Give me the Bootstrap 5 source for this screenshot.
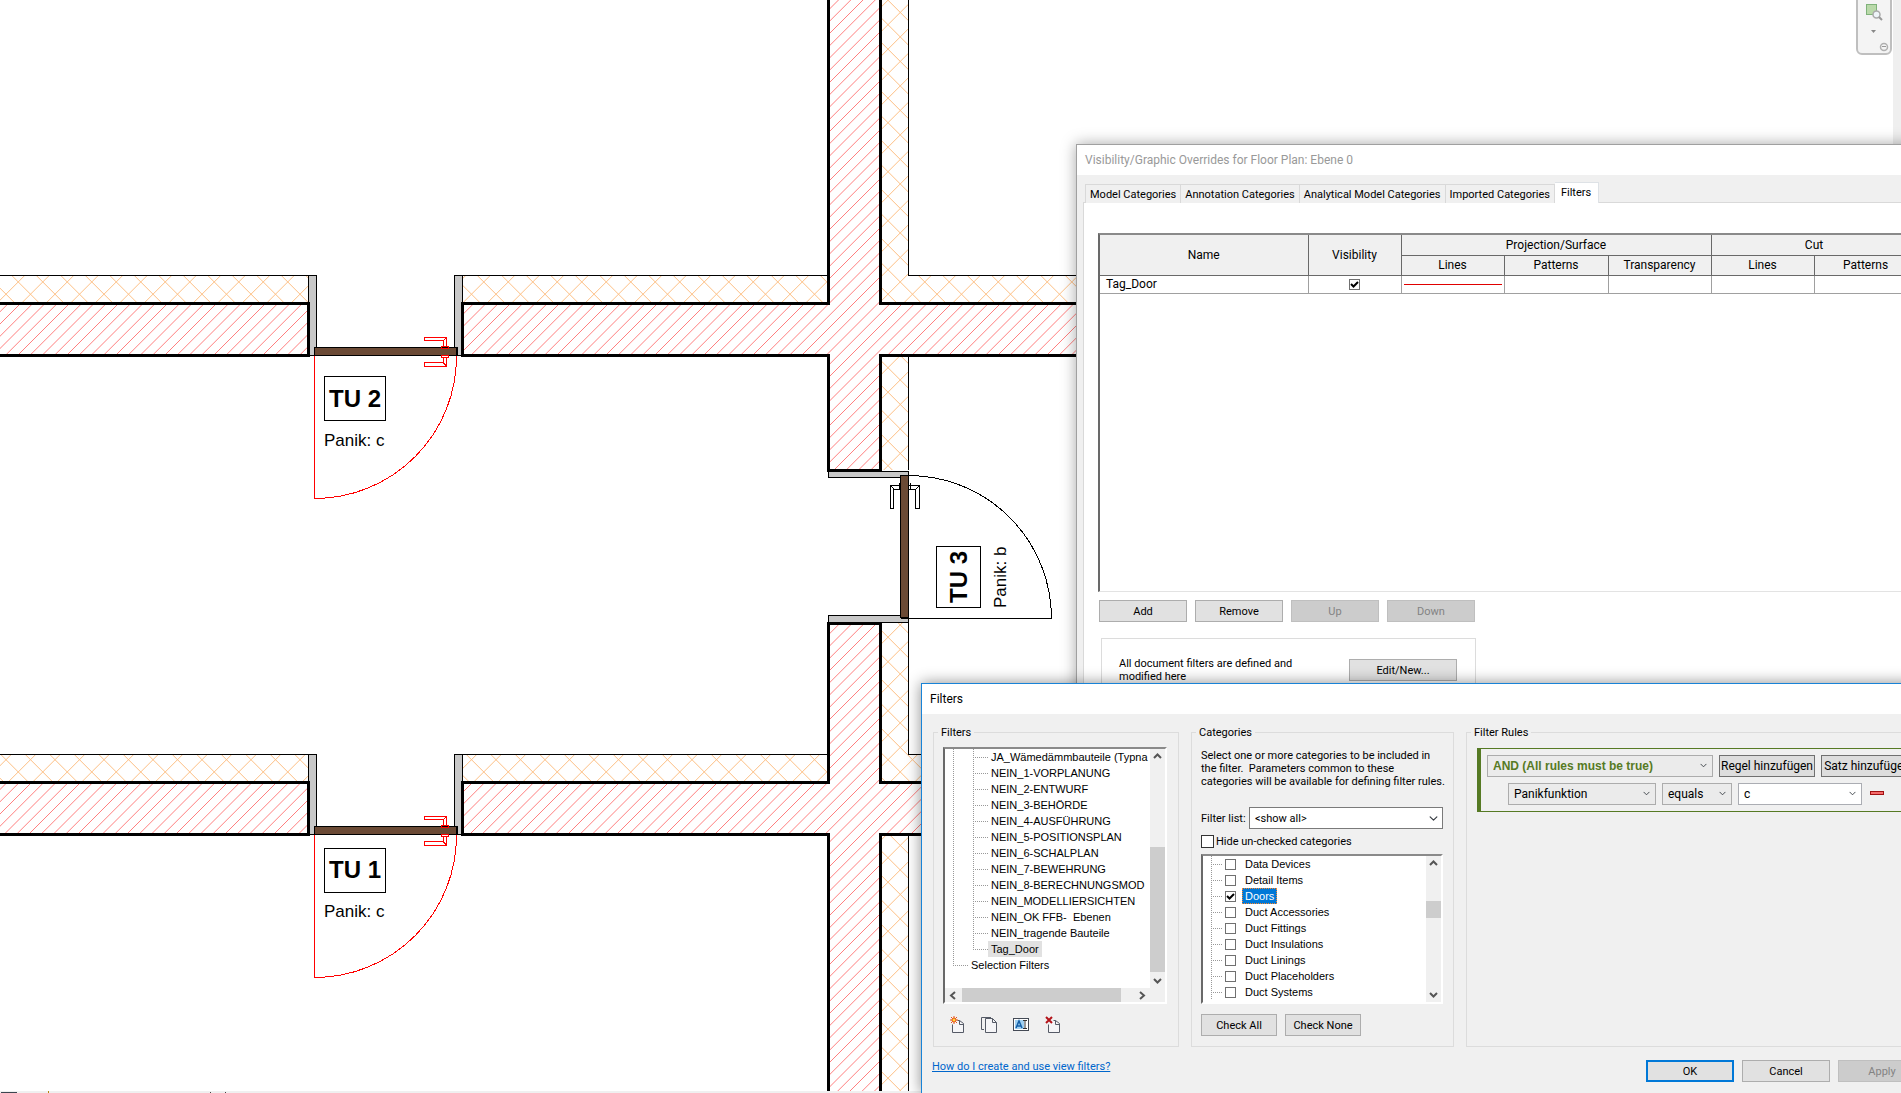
<!DOCTYPE html>
<html lang="en">
<head>
<meta charset="utf-8">
<meta name="viewport" content="width=device-width, initial-scale=1">
<title>Floor Plan: Ebene 0</title>
<link rel="stylesheet" href="https://cdn.jsdelivr.net/npm/bootstrap@5.3.0/dist/css/bootstrap.min.css">
<style>
body{font-family:Roboto,"Open Sans",sans-serif;font-size:11px;line-height:13px;color:#000;background:#fff;height:100vh}
.plan-svg{width:100%;height:100%;display:block}
.plan-svg text{font-family:"Liberation Sans",sans-serif;fill:#000}
.tag-no{font-size:24px;font-weight:700}
.tag-info{font-size:17px}
/* windows */
.win{position:absolute;background:#f0f0f0}
.win-overrides{left:1076px;top:144px;right:-40px;bottom:0;border:1px solid #a0a0a0;box-shadow:0 0 14px rgba(0,0,0,.35)}
.win-filters{left:921px;top:683px;right:-37px;bottom:0;border:1px solid #1883d7;border-bottom:0;box-shadow:0 0 14px rgba(0,0,0,.45)}
.win-title{background:#fff;height:30px;padding-left:8px;font-size:12px;font-weight:400;margin:0}
.win-title.idle{color:#999}
.view-edge{position:absolute;right:0;top:0;width:8px;height:144px;background:#efefef}
.nav-wheel{position:absolute;right:9px;top:-12px;width:36px;height:67px;background:#f4f4f4;border:2px solid #bfbfbf;border-radius:6px}
.status-edge{position:absolute;left:0;right:0;bottom:0;height:2px;background:#f0f0f0}
/* controls */
.btn-win{--bs-btn-font-size:11px;--bs-btn-line-height:13px;--bs-btn-padding-x:0;--bs-btn-padding-y:0;--bs-btn-border-radius:0;--bs-btn-color:#000;--bs-btn-bg:#e1e1e1;--bs-btn-border-color:#adadad;--bs-btn-hover-color:#000;--bs-btn-hover-bg:#e5f1fb;--bs-btn-hover-border-color:#0078d7;--bs-btn-disabled-color:#838383;--bs-btn-disabled-bg:#ccc;--bs-btn-disabled-border-color:#bfbfbf;--bs-btn-disabled-opacity:1;width:88px;height:22px;flex:none}
.btn-win.btn-default{border:2px solid #0078d7}
.btn-win.btn-check-set{width:76px}
.btn-win.btn-edit{width:108px;margin-top:2px}
.btn-win.btn-rule{width:auto;padding:0 1px;min-width:92px;font-size:12px;--bs-btn-bg:#ddd;--bs-btn-border-color:#707070}
.btn-win.btn-rule-add{width:96px}
.select-win{font-size:11px;line-height:13px;color:#000;height:22px;min-height:0;padding:0 18px 0 5px;border:1px solid #7a7a7a;border-radius:0;background-color:#fff;background-size:9px 9px;background-position:right 4px center;flex:none}
.select-rule{font-size:12px;border-color:#acacac;background-color:#ebebeb;background-size:7px 7px;background-position:right 5px top 6px}
.select-value{background-color:#fff;border-color:#abadb3}
.rule-and{color:#567a24;font-family:"Liberation Sans",sans-serif;font-weight:700}
.tick[type=checkbox]{width:11px;height:11px;margin:0;border:1px solid #707070;border-radius:0;background-color:#fff;flex:none;float:none}
.tick[type=checkbox]:checked{border-color:#707070;background-size:9px 9px;background-image:url("data:image/svg+xml,%3csvg xmlns='http://www.w3.org/2000/svg' viewBox='0 0 9 9'%3e%3cpath d='M1 4l2.5 2.5L8 2' fill='none' stroke='%23000' stroke-width='2'/%3e%3c/svg%3e")}
.tick-lg[type=checkbox]{width:13px;height:13px;border-color:#333}
#catTree .tick{margin:0 6px 0 3px}
/* tabs */
.tabs-win{padding:7px 0 0 8px;margin:0;border:0}
.tabs-win .nav-link{color:#000;font-size:11px;line-height:13px;padding:2px 4px;height:19px;border:1px solid #d9d9d9;border-bottom:0;border-left:0;border-radius:0;background:#f0f0f0;white-space:nowrap}
.tabs-win .nav-item:first-child .nav-link{border-left:1px solid #d9d9d9}
.tabs-win .nav-link.active{background:#fff;height:21px;padding:1px 7px 3px 6px;margin-bottom:-1px}
.tab-page{margin-left:6px;background:#fff;border:1px solid #d9d9d9;padding:30px 0 0 14px}
/* overrides table */
.grid-frame{border:2px solid #696969;border-color:#8a8a8a #fff #e3e3e3 #696969;border-bottom-width:1px;height:359px}
.grid-table{table-layout:fixed;width:1026px;border-collapse:collapse;font-size:12px;line-height:14px}
.grid-table th{font-weight:400;text-align:center;background:#f0f0f0;border:1px solid #696969;height:20px;padding:0;border-top:0}
.grid-table td{border:1px solid #a0a0a0;height:18px;padding:0;text-align:center;vertical-align:middle}
.grid-table tr>:first-child{border-left:0}
.grid-table tr.sub>:first-child{border-left:1px solid #696969}
.grid-table td.cell-name{text-align:left;padding-left:6px}
.line-sample{border-top:1px solid #e00000;margin:0 2px}
.under-grid{padding-left:1px}
.note-box{width:375px;margin:16px 0 0 2px;padding:18px 18px 18px 17px}
.note-box,.group-win{border:1px solid #dcdcdc}
.note-box p{width:190px}
/* group boxes */
.group-win{height:321px;min-width:0;margin:0;padding:0}
.group-win legend{float:none;width:auto;font-size:11px;line-height:13px;margin:0 0 0 4px;padding:0 3px}
.win-body{padding:12px 0 0 11px;gap:12px}
.group-filters{width:246px;flex:none}
.group-cats{width:263px;flex:none}
.filters-inner{padding:8px 11px 0 9px}
.filter-tools{padding:12px 0 0 6px;gap:16px}
.cats-inner{padding:10px 10px 0 9px}
.cats-inner p{white-space:nowrap}
.pane-list{border:2px solid #696969;border-color:#8a8a8a #fff #fff #696969;background:#fff;font-family:"Liberation Sans",sans-serif;overflow:hidden}
.pane-list ul{height:100%;overflow:hidden}
.pane-list li{display:flex;align-items:center;height:16px;white-space:nowrap}
.dots{align-self:stretch;flex:none;width:20px;--v:100%;background:repeating-linear-gradient(#999 0 1px,transparent 1px 2px) left top/1px var(--v) no-repeat}
.dots.twig{width:15px;background:repeating-linear-gradient(#999 0 1px,transparent 1px 2px) left top/1px var(--v) no-repeat,repeating-linear-gradient(90deg,#999 0 1px,transparent 1px 2px) left 8px/100% 1px no-repeat}
.dots.last{--v:50%}
.group-cats .dots.twig{width:11px}
.node{padding:0 3px;line-height:16px}
.node.chosen{background:#e1e1e1}
.node.active-node{background:#0078d7;color:#fff;outline:1px dotted #ff8728;outline-offset:-1px}
.sb{background:#f0f0f0;flex:none;display:flex}
.sb svg{width:15px;height:15px;flex:none}
.sb-v{width:15px;flex-direction:column}
.sb-thumb{background:#cdcdcd}
.icon-btn{border:0;background:none;padding:0;width:16px;height:16px;line-height:0}
.help-link{color:#0066cc}
.rule-set{border:1px solid #567a24;border-left-width:4px;margin:9px 0 0 10px;padding:6px 0 6px 6px}
.rule-line{gap:6px}
.rule-line+.rule-line{margin-top:6px;padding-left:21px}
</style>
<script src="https://cdn.jsdelivr.net/npm/bootstrap@5.3.0/dist/js/bootstrap.bundle.min.js"></script>
</head>
<body class="position-relative overflow-hidden">

<main class="h-100">
<svg class="plan-svg" role="img" aria-label="Floor plan">
  <defs>
    <clipPath id="brick"><path d="M0 303H308V355H0zM462 303H1100V355H462zM0 782H308V834H0zM462 782H1100V834H462zM829 0H881V470H829zM829 624H881V1091H829z"/></clipPath>
    <clipPath id="insul"><path d="M0 276H308V302H0zM462 276H827V302H462zM882 276H1100V302H882zM0 755H308V781H0zM462 755H827V781H462zM882 755H1100V781H882zM882 0H908V276H882zM882 356H908V470H882zM882 623H908V755H882zM882 836H908V1091H882z"/></clipPath>
    <g id="door">
      <path d="M308.500 275.500H316.500V355.500H308.500zM454.500 275.500H462.500V355.500H454.500z" fill="#c8c8c8" stroke="#000"/>
      <path d="M308.500 302V357M462.500 302V357" stroke="#000" stroke-width="3"/>
      <path d="M308 355.500H462" stroke="#000"/>
      <rect x="314.500" y="347.500" width="142" height="8" fill="#6b4a35" stroke="#000"/>
      <path d="M457 347V356" stroke="#000" stroke-width="2"/>
      <g fill="none" stroke="#f00">
        <path d="M314.500 356V498.500A142 142 0 0 0 456.500 356"/>
        <path d="M443.500 346V340.500H424.500V337.500H446.500V346M446 338L443 341M441.500 348.500V346.500H448.500V348.500z"/>
        <path d="M443.500 357V362.500H424.500V366.500H446.500V357M446 366L443 362M441.500 355.500H448.500V357.500H441.500z"/>
      </g>
    </g>
  </defs>
  <g clip-path="url(#insul)"><path id="cross" fill="none" stroke="#fdbf84"/></g>
  <g clip-path="url(#brick)"><path id="slant" fill="none" stroke="#ff7f7f"/></g>
  <g fill="none" stroke="#000" shape-rendering="crispEdges">
    <path d="M0 275.500H308M462 275.500H828M908.500 0V275.500H1100M908.500 356V470M0 754.500H308M462 754.500H828M908.500 623V754.500H1100M908.500 836V1091"/>
    <g stroke-width="3">
      <path d="M0 303.500H308.500V355.500H0M828.500 0V303.500H462.500V355.500H828.500V470.500H880.500V355.500H1100M880.500 0V303.500H1100"/>
      <path d="M0 782.500H308.500V834.500H0M828.500 1091V834.500H462.500V782.500H828.500V623.500H880.500V782.500H1100M1100 834.500H880.500V1091"/>
    </g>
    <use href="#door"/>
    <use href="#door" y="479"/>
    <path d="M828.500 471.500H908.500V477.500H828.500zM828.500 615.500H908.500V622.500H828.500z" fill="#c8c8c8"/>
    <path d="M828 470.500H881M828 623.500H881" stroke-width="2"/>
    <rect x="900.500" y="475.500" width="8" height="142" fill="#6b4a35"/>
    <path d="M901 618H908" stroke-width="2"/>
    <path d="M899 485.500H890.500V508.500H893.500V489.500H899M891 486L894 489M909 485.500H919.500V508.500H915.500V489.500H909M919 486L916 489M899.500 483V490M910.500 483V490"/>
    <path d="M908.500 618.500H1051.500A143 143 0 0 0 908.500 475.500"/>
  </g>
  <g fill="#fff" stroke="#000" shape-rendering="crispEdges">
    <rect x="324.500" y="376.500" width="61" height="44"/>
    <rect x="324.500" y="848.500" width="61" height="44"/>
    <rect x="936.500" y="546.500" width="44" height="61"/>
  </g>
  <text class="tag-no" x="355" y="407" text-anchor="middle">TU 2</text>
  <text class="tag-info" x="324" y="446">Panik: c</text>
  <text class="tag-no" x="355" y="878" text-anchor="middle">TU 1</text>
  <text class="tag-info" x="324" y="917">Panik: c</text>
  <g transform="translate(967 577) rotate(-90)"><text class="tag-no" text-anchor="middle">TU 3</text></g>
  <g transform="translate(1006 608) rotate(-90)"><text class="tag-info">Panik: b</text></g>
</svg>
</main>

<div class="view-edge"></div>
<div class="nav-wheel d-flex flex-column align-items-center">
  <svg width="32" height="63" aria-hidden="true">
    <rect x="8.500" y="14.500" width="10" height="10" fill="#b9d9a9" stroke="#7fb27a"/>
    <circle cx="18.500" cy="24.500" r="3.500" fill="#eef4f8" stroke="#aaa" stroke-width="1.500"/><path d="M21 27l3 3" stroke="#999" stroke-width="2"/>
    <path d="M13 40h5l-2.500 3z" fill="#888"/>
    <circle cx="26" cy="57" r="3.500" fill="none" stroke="#b0b0b0" stroke-width="1.500"/><path d="M24 56.500h4" stroke="#999"/>
  </svg>
</div>
<div class="status-edge"><svg class="d-block" width="240" height="2" aria-hidden="true"><path d="M1 1.500H17" stroke="#3c4650"/><path d="M48.500 0V2" stroke="#b8860b"/><path d="M210.500 1V2M225.500 1V2" stroke="#444"/></svg></div>

<section class="win win-overrides" aria-label="Visibility/Graphic Overrides">
  <h1 class="win-title idle d-flex align-items-center">Visibility/Graphic Overrides for Floor Plan: Ebene 0</h1>
  <ul class="nav nav-tabs tabs-win flex-nowrap align-items-end">
    <li class="nav-item"><button class="nav-link" type="button">Model Categories</button></li>
    <li class="nav-item"><button class="nav-link" type="button">Annotation Categories</button></li>
    <li class="nav-item"><button class="nav-link" type="button">Analytical Model Categories</button></li>
    <li class="nav-item"><button class="nav-link" type="button">Imported Categories</button></li>
    <li class="nav-item"><button class="nav-link active" type="button">Filters</button></li>
  </ul>
  <div class="tab-page">
    <div class="grid-frame">
      <table class="grid-table">
        <colgroup><col style="width:208px"><col style="width:93px"><col style="width:103px"><col style="width:104px"><col style="width:103px"><col style="width:103px"><col style="width:103px"><col></colgroup>
        <thead>
          <tr><th rowspan="2">Name</th><th rowspan="2">Visibility</th><th colspan="3">Projection/Surface</th><th colspan="2">Cut</th><th rowspan="2"></th></tr>
          <tr class="sub"><th>Lines</th><th>Patterns</th><th>Transparency</th><th>Lines</th><th>Patterns</th></tr>
        </thead>
        <tbody>
          <tr><td class="cell-name">Tag_Door</td><td><input class="form-check-input tick d-block mx-auto" type="checkbox" checked aria-label="Tag_Door visibility"></td><td><div class="line-sample"></div></td><td></td><td></td><td></td><td></td><td></td></tr>
        </tbody>
      </table>
    </div>
    <div class="under-grid">
      <div class="d-flex gap-2 pt-2">
        <button class="btn btn-win" type="button">Add</button>
        <button class="btn btn-win" type="button">Remove</button>
        <button class="btn btn-win" type="button" disabled>Up</button>
        <button class="btn btn-win" type="button" disabled>Down</button>
      </div>
      <div class="note-box d-flex justify-content-between align-items-start">
        <p class="mb-0">All document filters are defined and modified here</p>
        <button class="btn btn-win btn-edit" type="button">Edit/New...</button>
      </div>
    </div>
  </div>
</section>

<section class="win win-filters" aria-label="Filters">
  <h2 class="win-title d-flex align-items-center">Filters</h2>
  <div class="win-body d-flex">
    <fieldset class="group-win group-filters">
      <legend>Filters</legend>
      <div class="filters-inner">
        <div class="pane-list" style="height:257px">
          <div class="d-flex" style="height:239px">
            <ul class="list-unstyled mb-0 ps-2 flex-grow-1" id="filterTree"></ul>
            <div class="sb sb-v">
              <svg><path d="M4 9l3.500-3.500L11 9" fill="none" stroke="#555" stroke-width="2"/></svg>
              <div style="height:83px"></div><div class="sb-thumb" style="height:125px"></div>
              <svg class="mt-auto"><path d="M4 6l3.500 3.500L11 6" fill="none" stroke="#555" stroke-width="2"/></svg>
            </div>
          </div>
          <div class="sb">
            <svg><path d="M10 4L6 7.500L10 11" fill="none" stroke="#555" stroke-width="2"/></svg>
            <div class="sb-thumb" style="width:159px;margin:0 14px 0 2px"></div>
            <svg><path d="M5 4l4 3.500L5 11" fill="none" stroke="#555" stroke-width="2"/></svg>
          </div>
        </div>
        <div class="d-flex filter-tools">
          <button class="icon-btn" type="button" aria-label="New"><svg width="16" height="17"><path d="M3.500 8.500V16.500H14.500V7.500L10.500 4.500H8.500" fill="#f5f5f7" stroke="#555a66"/><path d="M10.500 4.500V8.500H14.500" fill="none" stroke="#555a66"/><path d="M5 0v8M1 4h8M2 1l6 6M8 1L2 7" stroke="#e8541a" stroke-width="1"/><circle cx="5" cy="4" r="2" fill="#ffd83a" stroke="#e8541a"/></svg></button>
          <button class="icon-btn" type="button" aria-label="Duplicate"><svg width="17" height="17"><path d="M3 13.500H.500V1.500H10" fill="none" stroke="#555a66"/><path d="M4.500 2.500H11.500L15.500 6.500V16.500H4.500z" fill="#f5f5f7" stroke="#555a66"/><path d="M11.500 2.500V6.500H15.500" fill="none" stroke="#555a66"/></svg></button>
          <button class="icon-btn" type="button" aria-label="Rename"><svg width="16" height="17"><rect x=".500" y="2.500" width="15" height="12" fill="#fff" stroke="#444a55"/><rect x="2" y="4" width="9" height="9" fill="#9fd0f2"/><path d="M3 12L6 5L9 12M4 10H8" fill="none" stroke="#1460a8" stroke-width="1.500"/><path d="M10 4.500H14M12 5V12M10 12.500H14" stroke="#333"/></svg></button>
          <button class="icon-btn" type="button" aria-label="Delete"><svg width="16" height="17"><path d="M3.500 8.500V16.500H14.500V7.500L10.500 4.500H8.500" fill="#f5f5f7" stroke="#555a66"/><path d="M10.500 4.500V8.500H14.500" fill="none" stroke="#555a66"/><path d="M1 1l6 6M7 1L1 7" stroke="#b4141a" stroke-width="2"/></svg></button>
        </div>
      </div>
    </fieldset>

    <fieldset class="group-win group-cats">
      <legend>Categories</legend>
      <div class="cats-inner">
        <p class="mb-0">Select one or more categories to be included in<br>the filter.&nbsp; Parameters common to these<br>categories will be available for defining filter rules.</p>
        <div class="d-flex align-items-center justify-content-between" style="margin-top:19px">
          <label for="filterList">Filter list:</label>
          <select class="form-select select-win" id="filterList" style="width:194px"><option>&lt;show all&gt;</option></select>
        </div>
        <div class="d-flex align-items-center" style="margin:6px 0;gap:2px">
          <input class="form-check-input tick tick-lg" type="checkbox" id="hideUn"><label for="hideUn">Hide un-checked categories</label>
        </div>
        <div class="pane-list d-flex" style="height:150px">
          <ul class="list-unstyled mb-0 ps-2 flex-grow-1" id="catTree"></ul>
          <div class="sb sb-v">
            <svg><path d="M4 9l3.500-3.500L11 9" fill="none" stroke="#555" stroke-width="2"/></svg>
            <div style="height:30px"></div><div class="sb-thumb" style="height:17px"></div>
            <svg class="mt-auto"><path d="M4 6l3.500 3.500L11 6" fill="none" stroke="#555" stroke-width="2"/></svg>
          </div>
        </div>
        <div class="d-flex gap-2" style="margin-top:10px">
          <button class="btn btn-win btn-check-set" type="button">Check All</button>
          <button class="btn btn-win btn-check-set" type="button">Check None</button>
        </div>
      </div>
    </fieldset>

    <fieldset class="group-win flex-grow-1">
      <legend>Filter Rules</legend>
      <div class="rule-set">
        <div class="d-flex rule-line">
          <select class="form-select select-win select-rule rule-and" aria-label="Rule set" style="width:226px"><option>AND (All rules must be true)</option></select>
          <button class="btn btn-win btn-rule btn-rule-add" type="button">Regel hinzufügen</button>
          <button class="btn btn-win btn-rule" type="button">Satz hinzufügen</button>
        </div>
        <div class="d-flex align-items-center rule-line">
          <select class="form-select select-win select-rule" aria-label="Parameter" style="width:148px"><option>Panikfunktion</option></select>
          <select class="form-select select-win select-rule" aria-label="Operator" style="width:70px"><option>equals</option></select>
          <select class="form-select select-win select-rule select-value" aria-label="Value" style="width:124px"><option>c</option></select>
          <button class="icon-btn" type="button" aria-label="Remove rule"><svg width="16" height="16"><rect x="2.500" y="5.500" width="13" height="3" fill="#f56a6a" stroke="#a01010"/></svg></button>
        </div>
      </div>
    </fieldset>
  </div>
  <div class="d-flex justify-content-between align-items-start pt-2" style="margin:5px 11px 0 10px">
    <a class="help-link" href="#">How do I create and use view filters?</a>
    <div class="d-flex gap-2">
      <button class="btn btn-win btn-default" type="button">OK</button>
      <button class="btn btn-win" type="button">Cancel</button>
      <button class="btn btn-win" type="button" disabled>Apply</button>
    </div>
  </div>
</section>

<script>
// wall hatching: 45 degree lines kept in one grid over the whole plan
let slant = '', cross = '';
for (let s = 5.5; s < 2300; s += 12.25) slant += `M${s} 0L${s - 1100} 1100`;
for (let s = 6.2; s < 2300; s += 24.5) cross += `M${s} 0L${s - 1100} 1100`;
for (let d = 5.8 - 1102.5; d < 1150; d += 24.5) cross += `M${d} 0L${d + 1100} 1100`;
document.getElementById('slant').setAttribute('d', slant);
document.getElementById('cross').setAttribute('d', cross);

const filters = ['JA_Wämedämmbauteile (Typna', 'NEIN_1-VORPLANUNG', 'NEIN_2-ENTWURF', 'NEIN_3-BEHÖRDE', 'NEIN_4-AUSFÜHRUNG', 'NEIN_5-POSITIONSPLAN', 'NEIN_6-SCHALPLAN', 'NEIN_7-BEWEHRUNG', 'NEIN_8-BERECHNUNGSMOD', 'NEIN_MODELLIERSICHTEN', 'NEIN_OK FFB-\u00a0 Ebenen', 'NEIN_tragende Bauteile', 'Tag_Door'];
document.getElementById('filterTree').innerHTML = filters.map(f => {
  const sel = f === 'Tag_Door';
  return `<li><span class="dots"></span><span class="dots twig ${sel ? 'last' : ''}"></span><span class="node ${sel ? 'chosen' : ''}">${f}</span></li>`;
}).join('') + '<li><span class="dots twig last"></span><span class="node">Selection Filters</span></li>';

const cats = ['Data Devices', 'Detail Items', 'Doors', 'Duct Accessories', 'Duct Fittings', 'Duct Insulations', 'Duct Linings', 'Duct Placeholders', 'Duct Systems'];
document.getElementById('catTree').innerHTML = cats.map((c, i) => {
  const on = c === 'Doors';
  return `<li><span class="dots twig"></span><input class="form-check-input tick" type="checkbox" id="cat${i}" ${on ? 'checked' : ''}><label class="node ${on ? 'active-node' : ''}" for="cat${i}">${c}</label></li>`;
}).join('');
</script>
</body>
</html>
